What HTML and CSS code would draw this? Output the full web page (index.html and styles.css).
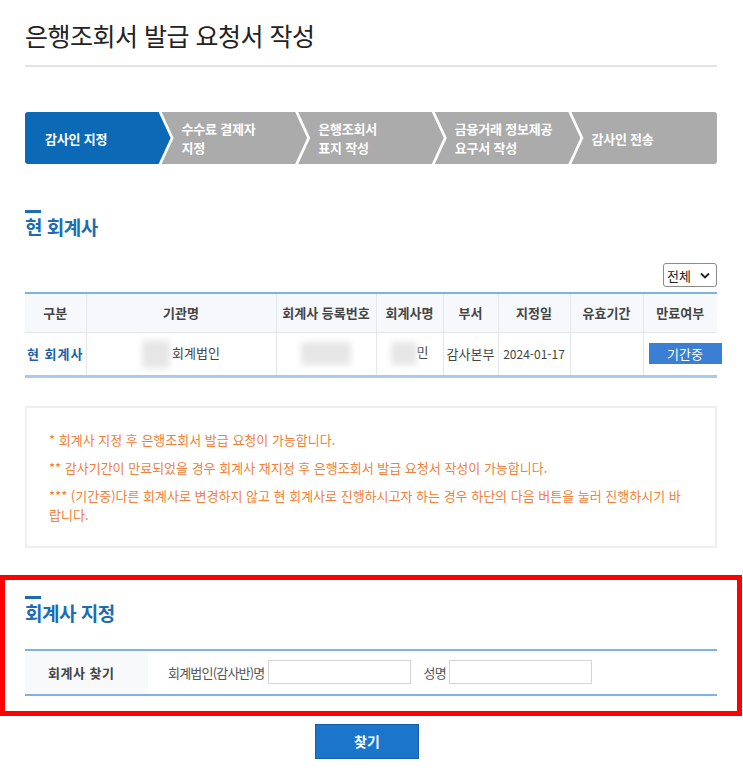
FILE: index.html
```html
<!DOCTYPE html>
<html lang="ko">
<head>
<meta charset="utf-8">
<title>은행조회서 발급 요청서 작성</title>
<link rel="stylesheet" href="styles.css">
</head>
<body>
<div class="page">
  <h1 class="page-title">은행조회서 발급 요청서 작성</h1>

  <ol class="steps">
    <li class="step step-first step-active"><span>감사인 지정</span></li>
    <li class="step"><span>수수료 결제자<br>지정</span></li>
    <li class="step"><span>은행조회서<br>표지 작성</span></li>
    <li class="step"><span>금융거래 정보제공<br>요구서 작성</span></li>
    <li class="step step-last"><span>감사인 전송</span></li>
  </ol>

  <h2 class="section-title">현 회계사</h2>

  <div class="filter-row">
    <div class="select-box">
      <span>전체</span>
      <svg class="chev" width="10" height="7" viewBox="0 0 10 7"><path d="M1 1.5 L5 5.5 L9 1.5" fill="none" stroke="#222" stroke-width="1.8"/></svg>
    </div>
  </div>

  <table class="grid">
    <colgroup>
      <col class="c1"><col class="c2"><col class="c3"><col class="c4"><col class="c5"><col class="c6"><col class="c7"><col class="c8">
    </colgroup>
    <thead>
      <tr>
        <th>구분</th><th>기관명</th><th>회계사 등록번호</th><th>회계사명</th><th>부서</th><th>지정일</th><th>유효기간</th><th>만료여부</th>
      </tr>
    </thead>
    <tbody>
      <tr>
        <td class="kind">현 회계사</td>
        <td><span class="masked"><span class="blur blur-a"></span>회계법인</span></td>
        <td><span class="blur blur-b"></span></td>
        <td><span class="masked"><span class="blur blur-c"></span>민</span></td>
        <td>감사본부</td>
        <td class="date">2024-01-17</td>
        <td></td>
        <td class="status-cell"><span class="status">기간중</span></td>
      </tr>
    </tbody>
  </table>

  <div class="notice">
    <p>* 회계사 지정 후 은행조회서 발급 요청이 가능합니다.</p>
    <p>** 감사기간이 만료되었을 경우 회계사 재지정 후 은행조회서 발급 요청서 작성이 가능합니다.</p>
    <p>*** (기간중)다른 회계사로 변경하지 않고 현 회계사로 진행하시고자 하는 경우 하단의 다음 버튼을 눌러 진행하시기 바랍니다.</p>
  </div>

  <section class="assign">
    <h2 class="section-title">회계사 지정</h2>
    <div class="search-row">
      <div class="search-label">회계사 찾기</div>
      <div class="search-fields">
        <label class="field-label">회계법인(감사반)명</label>
        <input class="text-input" type="text">
        <label class="field-label field-label-2">성명</label>
        <input class="text-input" type="text">
      </div>
    </div>
  </section>

  <div class="actions">
    <button class="btn-primary" type="button">찾기</button>
  </div>
</div>
</body>
</html>
```

FILE: styles.css
```css
* { box-sizing: border-box; }
html, body { margin: 0; padding: 0; background: #fff; }
body {
  font-family: "Noto Sans CJK KR", "Noto Sans", sans-serif;
  color: #333;
  font-size: 13px;
}
.page {
  width: 743px;
  padding: 0 26px 0 25px;
}
.page-title {
  margin: 0;
  padding: 19px 0 14px;
  font-size: 25px;
  line-height: 32px;
  font-weight: 400;
  color: #222;
  letter-spacing: -0.5px;
  border-bottom: 2px solid #e3e3e3;
}

/* steps */
.steps {
  list-style: none;
  margin: 45px 0 0;
  padding: 0;
  display: flex;
  height: 52px;
}
.step {
  flex: 1 1 0;
  margin-left: -9px;
  background: #ababab;
  color: #fff;
  font-weight: 700;
  font-size: 13px;
  line-height: 19px;
  display: flex;
  align-items: center;
  padding-left: 20px;
  letter-spacing: -0.2px;
  clip-path: polygon(0 0, calc(100% - 12px) 0, 100% 50%, calc(100% - 12px) 100%, 0 100%, 12px 50%);
}
.step span { display: block; }
.step-first {
  margin-left: 0;
  border-radius: 3px 0 0 3px;
  clip-path: polygon(0 0, calc(100% - 12px) 0, 100% 50%, calc(100% - 12px) 100%, 0 100%);
}
.step-last {
  border-radius: 0 3px 3px 0;
  clip-path: polygon(0 0, 100% 0, 100% 100%, 0 100%, 12px 50%);
}
.step-active { background: #0b69b5; }

/* section title */
.section-title {
  margin: 46px 0 0;
  font-size: 19px;
  line-height: 24px;
  font-weight: 700;
  color: #1b6cb4;
  letter-spacing: -0.5px;
}
.section-title::before {
  content: "";
  display: block;
  width: 16px;
  height: 3px;
  background: #1b6cb4;
  margin-bottom: 2px;
}

/* filter */
.filter-row {
  margin-top: 24px;
  display: flex;
  justify-content: flex-end;
}
.select-box {
  width: 54px;
  height: 24px;
  border: 1px solid #8a8a8a;
  border-radius: 3px;
  display: flex;
  align-items: center;
  justify-content: space-between;
  padding: 0 6px 0 3px;
  font-size: 13px;
  color: #222;
}

/* table */
.grid {
  width: 100%;
  margin-top: 5px;
  border-collapse: collapse;
  table-layout: fixed;
  border-top: 2px solid #7fb2e0;
  border-bottom: 3px solid #a9cbea;
}
.c1 { width: 61px; } .c2 { width: 190px; } .c3 { width: 100px; } .c4 { width: 67px; }
.c5 { width: 55px; } .c6 { width: 72px; } .c7 { width: 73px; } .c8 { width: 74px; }
.grid th, .grid td {
  border-left: 1px solid #e3e6ea;
  text-align: center;
  padding: 0;
  white-space: nowrap;
}
.grid th:first-child, .grid td:first-child { border-left: 0; }
.grid th {
  height: 39px;
  background: #f6f8fb;
  font-weight: 700;
  color: #444;
  font-size: 13px;
  border-bottom: 1px solid #e3e6ea;
}
.grid td {
  height: 44px;
  color: #444;
  font-size: 13px;
}
.grid td.kind {
  color: #1a5fa6;
  font-weight: 700;
  letter-spacing: 1px;
}
.grid td.date { font-size: 12px; }
.masked { position: relative; display: inline-block; }
.blur {
  display: inline-block;
  vertical-align: middle;
  background: #e6e6e6;
  filter: blur(3px);
}
.blur-a { width: 28px; height: 28px; margin-right: 2px; }
.blur-b { width: 50px; height: 23px; }
.blur-c { width: 26px; height: 23px; margin-right: 0; }
.grid td.status-cell { padding: 0; text-align: left; }
.status {
  display: block;
  width: 73px;
  height: 21px;
  margin-left: 5px;
  background: #3a7fd4;
  color: #fff;
  font-size: 13px;
  line-height: 21px;
  text-align: center;
}

/* notice */
.notice {
  margin-top: 28px;
  border: 2px solid #eeeeee;
  padding: 22px 28px 22px 22px;
  color: #f0803a;
  font-size: 13px;
  line-height: 19px;
}
.notice p { margin: 0 0 9px; }
.notice p:last-child { margin-bottom: 0; }

/* assign section */
.assign {
  margin: 27px -25px 0;
  border: 5px solid #ff0000;
  padding: 16px 20px 15px;
}
.assign .section-title { margin-top: 0; }
.search-row {
  margin-top: 24px;
  display: flex;
  border-top: 2px solid #7fb2e0;
  border-bottom: 2px solid #7fb2e0;
  height: 47px;
}
.search-label {
  width: 123px;
  background: #f8f9fb;
  padding-left: 23px;
  display: flex;
  align-items: center;
  font-weight: 700;
  color: #444;
  font-size: 13px;
  letter-spacing: 0.5px;
}
.search-fields {
  display: flex;
  align-items: center;
  padding-left: 20px;
}
.field-label {
  color: #555;
  font-size: 13px;
  letter-spacing: -0.8px;
  margin-right: 4px;
}
.field-label-2 { margin-left: 12px; margin-right: 3px; }
.text-input {
  width: 143px;
  height: 24px;
  border: 1px solid #d4d4d4;
  padding: 0 4px;
  font: inherit;
  margin: 0;
}

/* actions */
.actions {
  display: flex;
  justify-content: center;
  margin-top: 8px;
  padding-right: 8px;
}
.btn-primary {
  width: 104px;
  height: 35px;
  background: #1a75cb;
  border: 1px solid #155ea6;
  color: #fff;
  font-family: inherit;
  font-weight: 700;
  font-size: 14px;
  padding: 0;
}
```
